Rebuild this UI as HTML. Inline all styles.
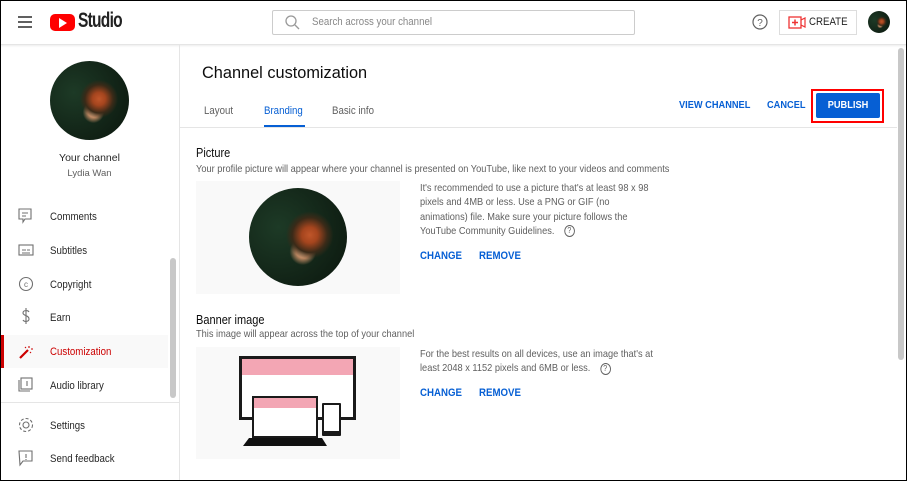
<!DOCTYPE html>
<html><head><meta charset="utf-8"><style>
*{margin:0;padding:0;box-sizing:border-box}
body{width:907px;height:481px;overflow:hidden;font-family:"Liberation Sans",sans-serif;background:#fff;position:relative}
.a{position:absolute;white-space:nowrap}
.s{transform:scaleX(.88);transform-origin:left top}
.frame{position:absolute;left:0;top:0;width:907px;height:481px;border:1px solid #000;pointer-events:none;z-index:10}
.nav{font-size:11px;color:#282828}
.blue{color:#065fd4;font-weight:bold;font-size:11px}
.gray{color:#606060;font-size:10.5px}
.fox{border-radius:50%;background:radial-gradient(circle at 62% 48%,#c0562a 0,#a5451e 10%,#3a2a18 22%,transparent 30%),radial-gradient(circle at 55% 65%,#d9b08a 0,#b98560 8%,transparent 16%),radial-gradient(circle at 30% 40%,#1d3a26,#122417 60%,#0b160d)}
.q{display:inline-block;width:12px;height:12px;border:1px solid #606060;border-radius:50%;font-size:8px;text-align:center;line-height:10px;margin-left:8px;vertical-align:middle}
</style></head><body>
<div class="frame"></div>
<div class="a" style="left:0;top:0;width:907px;height:45px;border-bottom:1px solid #e5e5e5;box-shadow:0 1px 2px rgba(0,0,0,.08)"></div>
<div class="a" style="left:18px;top:16px;width:14px;height:1.5px;background:#606060;box-shadow:0 5px 0 #606060,0 10px 0 #606060"></div>
<div class="a" style="left:50px;top:14px;width:25px;height:17px;background:#f00;border-radius:5px"></div>
<svg class="a" style="left:58px;top:18px" width="10" height="10"><path d="M1 0 L9 5 L1 10Z" fill="#fff"/></svg>
<div class="a" style="left:78px;top:9px;font-size:21px;font-weight:bold;letter-spacing:-1px;transform:scaleX(.74);transform-origin:left;color:#222">Studio</div>
<div class="a" style="left:272px;top:10px;width:363px;height:25px;border:1px solid #ccc;border-radius:2px"></div>
<svg class="a" style="left:285px;top:15px" width="15" height="15"><circle cx="6" cy="6" r="5" fill="none" stroke="#999" stroke-width="1.3"/><path d="M10 10L14 14" stroke="#999" stroke-width="1.3"/></svg>
<div class="a s" style="left:312px;top:16px;font-size:11px;color:#888">Search across your channel</div>
<svg class="a" style="left:752px;top:14px" width="16" height="16"><circle cx="8" cy="8" r="7" fill="none" stroke="#606060" stroke-width="1.2"/><text x="8" y="12" font-size="10" text-anchor="middle" fill="#606060" font-family="Liberation Sans">?</text></svg>
<div class="a" style="left:779px;top:10px;width:78px;height:25px;border:1px solid #ddd"></div>
<svg class="a" style="left:788px;top:16px" width="18" height="13"><rect x="1" y="1" width="12" height="11" fill="none" stroke="#e33" stroke-width="1.3"/><path d="M13 4L17 2V11L13 9" fill="none" stroke="#e33" stroke-width="1.2"/><path d="M7 3.5V9.5M4 6.5H10" stroke="#e33" stroke-width="1.5"/></svg>
<div class="a s" style="left:809px;top:16px;font-size:11px;color:#222">CREATE</div>
<div class="a fox" style="left:868px;top:11px;width:22px;height:22px"></div>
<div class="a" style="left:179px;top:45px;width:1px;height:436px;background:#e5e5e5"></div>
<div class="a fox" style="left:50px;top:61px;width:79px;height:79px"></div>
<div class="a" style="left:0;top:152px;width:179px;text-align:center;font-size:10.5px;color:#282828">Your channel</div>
<div class="a" style="left:0;top:168px;width:179px;text-align:center;font-size:9.5px;color:#606060">Lydia Wan</div>
<div class="a" style="left:1px;top:335px;width:167px;height:33px;background:#f9f9f9"></div>
<div class="a" style="left:1px;top:335px;width:3px;height:33px;background:#c00"></div>
<div class="a" style="left:170px;top:258px;width:6px;height:140px;background:#c8c8c8;border-radius:3px"></div>
<div class="a" style="left:1px;top:402px;width:178px;height:1px;background:#e5e5e5"></div>
<svg class="a" style="left:18px;top:208px" width="16" height="260" fill="none" stroke="#707070" stroke-width="1.1">
<path d="M1 1H13V11H7L5 14V11H1Z M4 5H10 M4 8H8"/>
<rect x="1" y="37" width="14" height="10"/><path d="M4 42H8M9 42H12M4 45H12"/>
<circle cx="8" cy="76" r="6.5"/><text x="8" y="79" font-size="8" fill="#707070" stroke="none" text-anchor="middle" font-family="Liberation Sans">c</text>
<path d="M11 104C10 102 5 102 5 105C5 108 11 107 11 111C11 114 6 114 5 112M8 100V116"/>
<path d="M2 150L10 142" stroke="#c00" stroke-width="2.2"/><path d="M11 138V140M13 141H15M12 144L13 145M7 139L8 140" stroke="#c00"/>
<rect x="3" y="170" width="11" height="11"/><path d="M1 172V183H12M9 173V178"/>
<circle cx="8" cy="217" r="3"/><circle cx="8" cy="217" r="6.5" stroke-dasharray="3 2"/>
<path d="M1 243H14V253H5L2 257Z M8 246V250 M8 251V252"/>
</svg>
<div class="a nav s" style="left:50px;top:211px">Comments</div>
<div class="a nav s" style="left:50px;top:245px">Subtitles</div>
<div class="a nav s" style="left:50px;top:279px">Copyright</div>
<div class="a nav s" style="left:50px;top:312px">Earn</div>
<div class="a nav s" style="left:50px;top:346px;color:#c00">Customization</div>
<div class="a nav s" style="left:50px;top:380px">Audio library</div>
<div class="a nav s" style="left:50px;top:420px">Settings</div>
<div class="a nav s" style="left:50px;top:453px">Send feedback</div>
<div class="a" style="left:898px;top:48px;width:6px;height:312px;background:#c8c8c8;border-radius:3px"></div>
<div class="a" style="left:202px;top:63px;font-size:17px;color:#0d0d0d;transform:scaleX(.96);transform-origin:left">Channel customization</div>
<div class="a s" style="left:204px;top:105px;font-size:11px;color:#606060">Layout</div>
<div class="a s" style="left:264px;top:105px;font-size:11px;color:#065fd4">Branding</div>
<div class="a" style="left:264px;top:125px;width:41px;height:2px;background:#065fd4"></div>
<div class="a s" style="left:332px;top:105px;font-size:11px;color:#606060">Basic info</div>
<div class="a" style="left:180px;top:127px;width:717px;height:1px;background:#e5e5e5"></div>
<div class="a blue s" style="left:679px;top:99px;font-size:10.5px">VIEW CHANNEL</div>
<div class="a blue s" style="left:767px;top:99px;font-size:10.5px">CANCEL</div>
<div class="a" style="left:811px;top:89px;width:73px;height:34px;border:2px solid #f00"></div>
<div class="a" style="left:816px;top:93px;width:64px;height:25px;background:#065fd4;border-radius:2px"></div>
<div class="a" style="left:816px;top:93px;width:64px;color:#fff;font-size:10.5px;font-weight:bold;text-align:center;line-height:25px;transform:scaleX(.88)">PUBLISH</div>
<div class="a s" style="left:196px;top:146px;font-size:12.5px;color:#0d0d0d">Picture</div>
<div class="a gray s" style="left:196px;top:163px">Your profile picture will appear where your channel is presented on YouTube, like next to your videos and comments</div>
<div class="a" style="left:196px;top:181px;width:204px;height:113px;background:#f9f9f9"></div>
<div class="a fox" style="left:249px;top:188px;width:98px;height:98px"></div>
<div class="a gray s" style="left:420px;top:181px;line-height:14.3px;white-space:normal;width:272px">It's recommended to use a picture that's at least 98 x 98 pixels and 4MB or less. Use a PNG or GIF (no animations) file. Make sure your picture follows the YouTube Community Guidelines. <span class="q">?</span></div>
<div class="a blue s" style="left:420px;top:250px">CHANGE</div>
<div class="a blue s" style="left:479px;top:250px">REMOVE</div>
<div class="a s" style="left:196px;top:313px;font-size:12.5px;color:#0d0d0d">Banner image</div>
<div class="a gray s" style="left:196px;top:328px">This image will appear across the top of your channel</div>
<div class="a" style="left:196px;top:347px;width:204px;height:112px;background:#f9f9f9"></div>
<svg class="a" style="left:196px;top:347px" width="204" height="112">
<rect x="43" y="9" width="117" height="64" fill="#1a1a1a"/><rect x="46" y="12" width="111" height="58" fill="#fff"/><rect x="46" y="12" width="111" height="16" fill="#f3a6b4"/>
<rect x="56" y="49" width="66" height="42" fill="#1a1a1a"/><rect x="58" y="51" width="62" height="38" fill="#fff"/><rect x="58" y="51" width="62" height="10" fill="#f3a6b4"/>
<path d="M53 91H126L131 99H47Z" fill="#111"/>
<rect x="126" y="56" width="19" height="33" rx="1" fill="#1a1a1a"/><rect x="128" y="58" width="15" height="26" fill="#fff"/>
</svg>
<div class="a gray s" style="left:420px;top:347px;line-height:14.3px;white-space:normal;width:272px">For the best results on all devices, use an image that's at least 2048 x 1152 pixels and 6MB or less. <span class="q">?</span></div>
<div class="a blue s" style="left:420px;top:387px">CHANGE</div>
<div class="a blue s" style="left:479px;top:387px">REMOVE</div>
</body></html>
